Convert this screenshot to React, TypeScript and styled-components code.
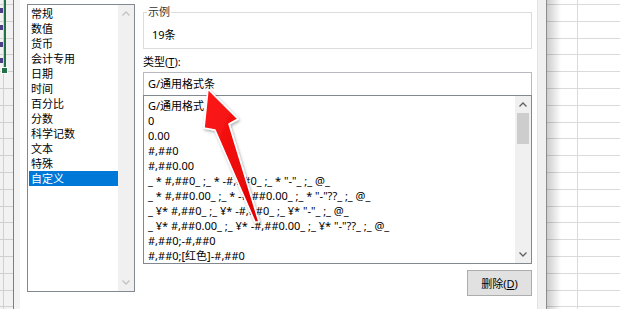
import React from 'react'
import styled, { createGlobalStyle } from 'styled-components'

const GlobalStyle = createGlobalStyle`
  html, body {
    margin: 0;
    padding: 0;
    background: #fff;
  }
  body {
    font-family: "Noto Sans", "Noto Sans CJK SC", sans-serif;
    font-size: 11px;
    color: #000;
  }
`

const Root = styled.div`
  position: relative;
  display: flex;
  width: 620px;
  height: 309px;
  overflow: hidden;
  background: #fff;
`

const SheetEdge = styled.div`
  position: relative;
  flex: 0 0 13px;
  border-right: 1px solid #7f7f7f;
  background:
    linear-gradient(to bottom, #4a3f8f 0 0) 0 0 / 0 0 no-repeat,
    repeating-linear-gradient(to bottom, transparent 0 8px, #4b3d86 8px 13px, transparent 13px 16.8px) 0 0 / 3px 68px no-repeat,
    linear-gradient(to right, transparent 3px, #d0d0d0 3px 4px, transparent 4px),
    repeating-linear-gradient(to bottom, #d0d0d0 0 1px, transparent 1px 16.8px) 0 4px,
    #f2f2f2;
`

const Selection = styled.div`
  position: absolute;
  left: 4px;
  top: 0;
  width: 2px;
  height: 70px;
  background: #217346;
`

const SelectionHandle = styled.div`
  position: absolute;
  left: 2px;
  top: 68px;
  width: 5px;
  height: 5px;
  background: #217346;
  outline: 1px solid #fff;
`

const Dialog = styled.div`
  flex: 0 0 523px;
  box-sizing: border-box;
  display: flex;
  gap: 8px;
  padding: 4px 5px 0 7px;
  border-left: 6px solid #f3f3f3;
  background: #fff;
`

const CategoryList = styled.div`
  flex: 0 0 108px;
  box-sizing: border-box;
  height: 288px;
  display: flex;
  border: 1px solid #828790;
  background: #fff;
`

const CategoryItems = styled.div`
  flex: 1;
  padding-top: 1px;
`

const CategoryItem = styled.div<{ $selected?: boolean }>`
  height: 15px;
  line-height: 15px;
  margin-left: 1px;
  padding-left: 2px;
  white-space: nowrap;
  background: ${(p) => (p.$selected ? '#0078d7' : 'transparent')};
  color: ${(p) => (p.$selected ? '#fff' : '#000')};
`

const ScrollBar = styled.div<{ $light?: boolean }>`
  flex: 0 0 16px;
  display: flex;
  flex-direction: column;
  align-items: center;
  background: #f0f0f0;
  color: ${(p) => (p.$light ? '#c2c2c2' : '#606060')};
`

const ScrollArrow = styled.div`
  flex: 0 0 17px;
  width: 100%;
  display: flex;
  align-items: center;
  justify-content: center;
`

const ScrollTrack = styled.div`
  flex: 1;
  width: 100%;
  display: flex;
  flex-direction: column;
  align-items: center;
`

const ScrollThumb = styled.div`
  width: 12px;
  height: 31px;
  background: #cdcdcd;
`

const RightPanel = styled.div`
  flex: 1;
  display: flex;
  flex-direction: column;
`

const SampleBox = styled.fieldset`
  box-sizing: border-box;
  height: 45px;
  margin: 0 0 5px;
  padding: 0 3px;
  border: 1px solid #dcdcdc;
  min-width: 0;

  legend {
    padding: 0 1px;
    line-height: 16px;
    color: #333;
  }
`

const SampleValue = styled.div`
  margin: 7px 0 0 5px;
  line-height: 15px;
`

const FieldLabel = styled.div`
  height: 16px;
  line-height: 16px;
  margin-bottom: 2px;

  u {
    text-decoration: underline;
  }
`

const TypeInput = styled.div`
  box-sizing: border-box;
  height: 23px;
  line-height: 21px;
  padding-left: 4px;
  border: 1px solid #b9b9c0;
  border-bottom: none;
`

const TypeList = styled.div`
  box-sizing: border-box;
  height: 169px;
  display: flex;
  border: 1px solid #828790;
`

const TypeItems = styled.div`
  flex: 1;
  padding: 2px 0 0 4px;
  overflow: hidden;
`

const TypeItem = styled.div`
  height: 15px;
  line-height: 15px;
  white-space: pre;
`

const ButtonRow = styled.div`
  display: flex;
  justify-content: flex-end;
  margin-top: 6px;
`

const DeleteButton = styled.button`
  box-sizing: border-box;
  width: 65px;
  height: 26px;
  padding: 0;
  border: 1px solid #adadad;
  background: #e1e1e1;
  font: inherit;
  color: #000;
`

const Gutter = styled.div`
  flex: 0 0 10px;
  box-sizing: border-box;
  border-left: 1px solid #e3e3e3;
  border-right: 1px solid #8c8c8c;
  background: #f0f0f0;
`

const Sheet = styled.div`
  flex: 1;
  background:
    linear-gradient(to right, rgba(0, 0, 0, 0.2), rgba(0, 0, 0, 0) 14px),
    linear-gradient(to right, transparent 30px, #dadada 30px 31px, transparent 31px),
    repeating-linear-gradient(to bottom, #dadada 0 1px, transparent 1px 16.8px) 0 4px,
    #fff;
`

const ArrowLayer = styled.svg`
  position: absolute;
  inset: 0;
  pointer-events: none;
`

const Chevron = ({ up }: { up?: boolean }) => (
  <svg width="8" height="5" viewBox="0 0 8 5">
    <polyline
      points={up ? '0.5,4.5 4,1 7.5,4.5' : '0.5,0.5 4,4 7.5,0.5'}
      fill="none"
      stroke="currentColor"
      strokeWidth="1.3"
    />
  </svg>
)

const categories = ['常规', '数值', '货币', '会计专用', '日期', '时间', '百分比', '分数', '科学记数', '文本', '特殊', '自定义']

const formats = [
  'G/通用格式',
  '0',
  '0.00',
  '#,##0',
  '#,##0.00',
  '_ * #,##0_ ;_ * -#,##0_ ;_ * "-"_ ;_ @_',
  '_ * #,##0.00_ ;_ * -#,##0.00_ ;_ * "-"??_ ;_ @_',
  '_ ¥* #,##0_ ;_ ¥* -#,##0_ ;_ ¥* "-"_ ;_ @_',
  '_ ¥* #,##0.00_ ;_ ¥* -#,##0.00_ ;_ ¥* "-"??_ ;_ @_',
  '#,##0;-#,##0',
  '#,##0;[红色]-#,##0',
]

export default function App() {
  return (
    <>
      <GlobalStyle />
      <Root>
        <SheetEdge>
          <Selection />
          <SelectionHandle />
        </SheetEdge>
        <Dialog>
          <CategoryList>
            <CategoryItems>
              {categories.map((c) => (
                <CategoryItem key={c} $selected={c === '自定义'}>
                  {c}
                </CategoryItem>
              ))}
            </CategoryItems>
            <ScrollBar $light>
              <ScrollArrow>
                <Chevron up />
              </ScrollArrow>
              <ScrollTrack />
              <ScrollArrow>
                <Chevron />
              </ScrollArrow>
            </ScrollBar>
          </CategoryList>
          <RightPanel>
            <SampleBox>
              <legend>示例</legend>
              <SampleValue>19条</SampleValue>
            </SampleBox>
            <FieldLabel>
              类型(<u>T</u>):
            </FieldLabel>
            <TypeInput>G/通用格式条</TypeInput>
            <TypeList>
              <TypeItems>
                {formats.map((f) => (
                  <TypeItem key={f}>{f}</TypeItem>
                ))}
              </TypeItems>
              <ScrollBar>
                <ScrollArrow>
                  <Chevron up />
                </ScrollArrow>
                <ScrollTrack>
                  <ScrollThumb />
                </ScrollTrack>
                <ScrollArrow>
                  <Chevron />
                </ScrollArrow>
              </ScrollBar>
            </TypeList>
            <ButtonRow>
              <DeleteButton>
                删除(<u>D</u>)
              </DeleteButton>
            </ButtonRow>
          </RightPanel>
        </Dialog>
        <Gutter />
        <Sheet />
        <ArrowLayer width="620" height="309" viewBox="0 0 620 309">
          <defs>
            <linearGradient id="arrowFill" x1="0" y1="0" x2="1" y2="1">
              <stop offset="0" stopColor="#ff1a1a" />
              <stop offset="1" stopColor="#e00000" />
            </linearGradient>
            <filter id="arrowShadow" x="-20%" y="-20%" width="140%" height="140%">
              <feDropShadow dx="1" dy="1.5" stdDeviation="1.5" floodColor="#000" floodOpacity="0.35" />
            </filter>
          </defs>
          <polygon
            points="208,89 238,119 229,124 259,222 255,222 215,130 204,128"
            fill="url(#arrowFill)"
            stroke="#fff"
            strokeWidth="1.6"
            strokeLinejoin="round"
            filter="url(#arrowShadow)"
          />
        </ArrowLayer>
      </Root>
    </>
  )
}
